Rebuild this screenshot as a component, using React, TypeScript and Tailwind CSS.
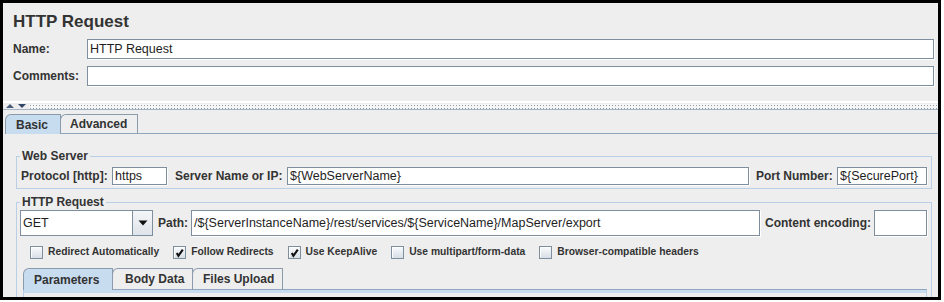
import React from "react";

const label = "font-bold text-[12px] text-[#333333] whitespace-nowrap";

function Field({ value, className }: { value?: string; className: string }) {
  return (
    <div
      className={`bg-white border border-[#7f8e9d] shadow-[1px_1px_0_#ffffff] flex items-center pl-[2px] text-[12.5px] text-[#1e1e1e] whitespace-nowrap overflow-hidden ${className}`}
    >
      {value}
    </div>
  );
}

function Check({ checked, text }: { checked?: boolean; text: string }) {
  return (
    <div className="flex items-center gap-[5px]">
      <svg width="13" height="13" viewBox="0 0 13 13">
        <defs>
          <linearGradient id="cbg" x1="0" y1="0" x2="0" y2="1">
            <stop offset="0" stopColor="#fbfcfd" />
            <stop offset="1" stopColor="#d6dde6" />
          </linearGradient>
        </defs>
        <rect x="0.5" y="0.5" width="12" height="12" fill="url(#cbg)" stroke="#7f8e9d" />
        <path d="M1.5 11.5 V1.5 H11.5" fill="none" stroke="#ffffff" />
        {checked && (
          <path d="M3.8 7 L5.4 9.8 L9.8 3.6" fill="none" stroke="#111111" strokeWidth="2.1" />
        )}
      </svg>
      <span className="font-bold text-[10.3px] text-[#333333] whitespace-nowrap">{text}</span>
    </div>
  );
}

function Tab({ text, selected, width, pl, h }: { text: string; selected?: boolean; width: string; pl: string; h: string }) {
  return (
    <div
      className={`${width} ${pl} ${h} -ml-px first:ml-0 border-t border-l border-r border-[#8b9bab] rounded-tl-[6px] font-bold text-[12px] text-[#333333] flex items-center whitespace-nowrap ${
        selected ? "bg-[#c8dcf0] relative z-10" : "bg-[#eeeeee] border-b border-b-[#8fa6bf]"
      }`}
    >
      {text}
    </div>
  );
}

export default function App() {
  return (
    <div className="w-[944px] h-[302px] bg-white font-['Liberation_Sans',Arial,sans-serif]">
      <div className="w-[941px] h-[300px] border-[3px] border-black bg-[#eeeeee] overflow-hidden flex flex-col">
        {/* header */}
        <div className="pt-[8px] pl-[10px] text-[17px] leading-[22px] font-bold text-[#333333]">HTTP Request</div>

        <div className="mt-[6px] flex items-center pr-[4px]">
          <div className={`${label} w-[84px] pl-[10px]`}>Name:</div>
          <Field value="HTTP Request" className="flex-1 h-[20px]" />
        </div>
        <div className="mt-[7px] flex items-center pr-[4px]">
          <div className={`${label} w-[84px] pl-[10px]`}>Comments:</div>
          <Field className="flex-1 h-[20px]" />
        </div>

        {/* splitter */}
        <div className="mt-[15px] h-[11px] border-t-2 border-white border-b border-b-[#a3b3c3] flex items-center pl-[3px]">
          <svg width="23" height="6" viewBox="0 0 23 6" className="shrink-0">
            <path d="M0 5 L4 1 L8 5 Z" fill="#4a5d78" />
            <path d="M12 1 L20 1 L16 5 Z" fill="#2f4466" />
          </svg>
          <div className="flex-1 h-[5px] bg-[#f6f6f6] bg-[radial-gradient(circle,#8f9cab_0.7px,transparent_0.9px)] bg-[length:3px_3px]" />
        </div>

        {/* top tabs */}
        <div className="mt-[4px] flex items-end pl-[2px]">
          <Tab text="Basic" selected width="w-[56px]" pl="pl-[10px]" h="h-[20px]" />
          <Tab text="Advanced" width="w-[78px]" pl="pl-[9px]" h="h-[20px]" />
          <div className="flex-1 h-[20px] border-b border-[#8fa6bf]" />
        </div>
        <div className="h-[4px] bg-[#c8dcf0]" />

        {/* Web Server */}
        <fieldset className="mt-[15px] ml-[13px] mr-[6px] border border-[#b8cfe5] pt-[4px] pb-[3px]">
          <legend className={`${label} ml-[3px] px-[2px] leading-[14px]`}>Web Server</legend>
          <div className="flex items-center pr-[4px]">
            <div className={`${label} w-[95px] pl-[4px]`}>Protocol [http]:</div>
            <Field value="https" className="w-[55px] h-[18px]" />
            <div className={`${label} w-[120px] pl-[8px]`}>Server Name or IP:</div>
            <Field value="${WebServerName}" className="flex-1 h-[18px]" />
            <div className={`${label} w-[88px] pl-[7px]`}>Port Number:</div>
            <Field value="${SecurePort}" className="w-[90px] h-[18px]" />
          </div>
        </fieldset>

        {/* HTTP Request */}
        <fieldset className="mt-[6px] ml-[13px] mr-[6px] border border-[#b8cfe5] pt-[1px] pb-[20px]">
          <legend className={`${label} ml-[3px] px-[2px] leading-[14px]`}>HTTP Request</legend>
          <div className="flex items-center pr-[4px]">
            <div className="ml-[3px] w-[133px] h-[26px] bg-white border border-[#7f8e9d] flex">
              <div className="flex-1 flex items-center pl-[2px] text-[12.5px] text-[#1e1e1e]">GET</div>
              <div className="w-[20px] border-l border-[#7f8e9d] bg-gradient-to-b from-[#f4f6f8] to-[#dfe4ea] flex items-center justify-center">
                <svg width="10" height="6" viewBox="0 0 10 6">
                  <path d="M0.5 0.5 L9.5 0.5 L5 5.5 Z" fill="#111111" />
                </svg>
              </div>
            </div>
            <div className={`${label} w-[38px] pl-[5px]`}>Path:</div>
            <Field value="/${ServerInstanceName}/rest/services/${ServiceName}/MapServer/export" className="flex-1 h-[26px]" />
            <div className={`${label} w-[114px] pl-[5px]`}>Content encoding:</div>
            <Field className="w-[53px] h-[26px]" />
          </div>

          <div className="mt-[9px] flex items-center gap-[14px] pl-[13px] h-[14px]">
            <Check text="Redirect Automatically" />
            <Check checked text="Follow Redirects" />
            <Check checked text="Use KeepAlive" />
            <Check text="Use multipart/form-data" />
            <Check text="Browser-compatible headers" />
          </div>

          {/* inner tabs */}
          <div className="mt-[9px] ml-[6px] mr-[4px]">
            <div className="flex items-end">
              <Tab text="Parameters" selected width="w-[90px]" pl="pl-[10px]" h="h-[22px]" />
              <Tab text="Body Data" width="w-[81px]" pl="pl-[12px]" h="h-[22px]" />
              <Tab text="Files Upload" width="w-[91px]" pl="pl-[10px]" h="h-[22px]" />
              <div className="flex-1 h-[22px] border-b border-[#8fa6bf]" />
            </div>
            <div className="h-[3px] bg-[#c8dcf0] border-x border-[#b8cfe5]" />
            <div className="h-[20px] border-x border-[#b8cfe5]" />
          </div>
        </fieldset>
      </div>
    </div>
  );
}
